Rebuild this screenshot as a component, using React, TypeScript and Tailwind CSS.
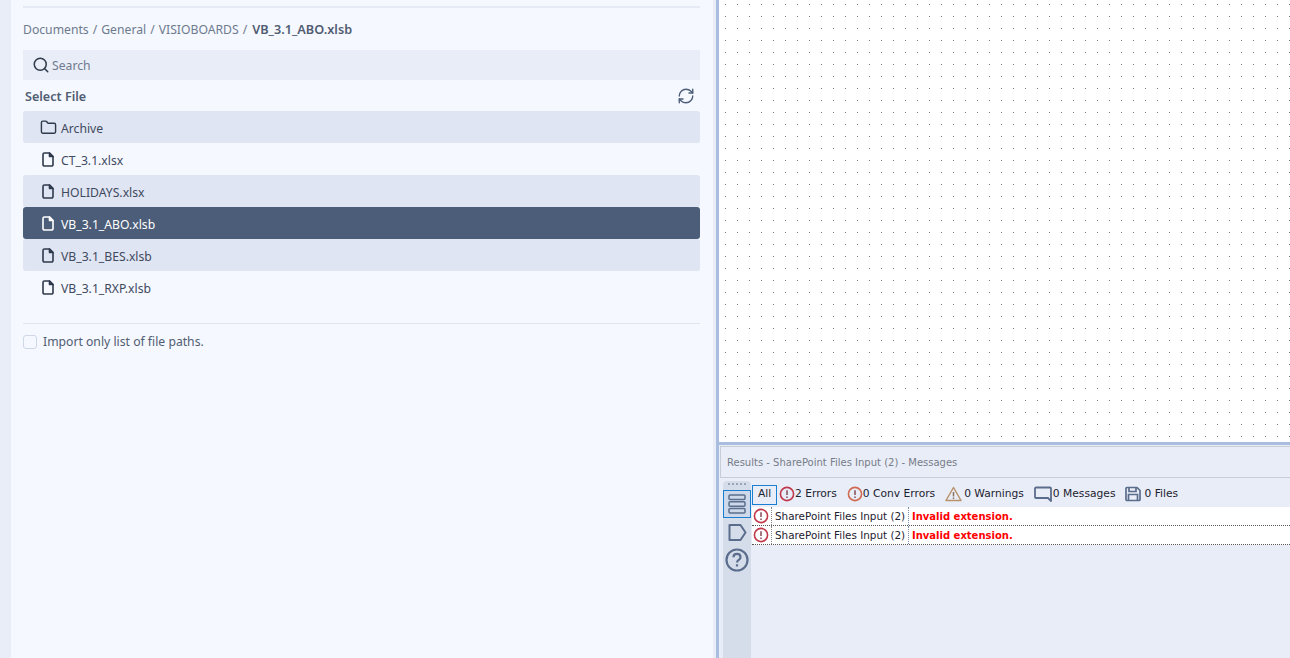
import { Folder, RefreshCw, Search } from "lucide-react";

const files = [
  { name: "Archive", folder: true, tone: "bg-[#dfe5f2] text-[#3f4a5f]" },
  { name: "CT_3.1.xlsx", tone: "text-[#3f4a5f]" },
  { name: "HOLIDAYS.xlsx", tone: "bg-[#dfe5f2] text-[#3f4a5f]" },
  { name: "VB_3.1_ABO.xlsb", tone: "bg-[#4b5d78] text-white" },
  { name: "VB_3.1_BES.xlsb", tone: "bg-[#dfe5f2] text-[#3f4a5f]" },
  { name: "VB_3.1_RXP.xlsb", tone: "text-[#3f4a5f]" },
];

function FileIcon({ color }: { color: string }) {
  return (
    <svg className="-ml-[1px]" width="12" height="15" viewBox="0 0 12 15" fill="none" stroke={color} strokeWidth="1.6">
      <path d="M1 2.500a1.500 1.500 0 0 1 1.500-1.500H7.500L11 4.500v8a1.500 1.500 0 0 1-1.500 1.500h-7A1.500 1.500 0 0 1 1 12.500z" strokeLinejoin="round" />
      <path d="M7.500 1v3.500H11z" fill={color} strokeLinejoin="round" />
    </svg>
  );
}

function AlertIcon({ color, size = 16 }: { color: string; size?: number }) {
  return (
    <svg width={size} height={size} viewBox="0 0 17 17" fill="none" stroke={color} strokeWidth="1.7">
      <circle cx="8.5" cy="8.5" r="7" />
      <path d="M8.5 4.5v5M8.5 11.2v1.600" stroke="#8a5560" />
    </svg>
  );
}

function FilterItem({ icon, label, gap = "gap-[1px]" }: { icon: React.ReactNode; label: string; gap?: string }) {
  return (
    <div className={`flex items-center ${gap}`}>
      {icon}
      <span>{label}</span>
    </div>
  );
}

function MessageRow() {
  return (
    <div className="flex h-[19px] items-center border-b border-dotted border-[#555] bg-white">
      <div className="flex h-full w-[20px] items-center border-r border-dotted border-[#888] pl-[1px]">
        <AlertIcon color="#c0394b" />
      </div>
      <div className="flex h-full w-[137px] items-center border-r border-dotted border-[#7a8fb0] pl-[3px] pt-[2px] text-[10.4px] text-[#1c2230]">
        SharePoint Files Input (2)
      </div>
      <div className="pl-[3px] text-[10px] font-bold text-[#ff0000]">Invalid extension.</div>
    </div>
  );
}

export default function App() {
  return (
    <div className="flex h-[658px] w-[1290px] overflow-hidden bg-[#e9edf7] font-['Noto_Sans',sans-serif]">
      <div className="w-[11px] shrink-0" />

      <div className="flex w-[702px] shrink-0 flex-col bg-[#f5f8fe] pl-[12px] pr-[13px] pt-[6px] text-[12.2px]">
        <div className="border-t-2 border-[#e6eaf5]" />
        <div className="mt-[12px] flex h-[20px] items-center gap-[4px] text-[#6e7a8e]">
          <span>Documents</span>
          <span>/</span>
          <span>General</span>
          <span>/</span>
          <span>VISIOBOARDS</span>
          <span>/</span>
          <span className="pl-[1px] text-[12.7px] font-semibold text-[#515d73]">VB_3.1_ABO.xlsb</span>
        </div>
        <div className="mt-[10px] flex h-[30px] items-center gap-[2px] bg-[#e9edf7] pl-[9px] text-[#6e7a8e]">
          <Search size={18} strokeWidth={2} className="text-[#2f3a4c]" />
          <span className="pt-[3px]">Search</span>
        </div>
        <div className="flex h-[31px] items-center justify-between pl-[2px] pr-[5px] text-[12.6px] font-semibold text-[#515d73]">
          <span className="pt-[3px]">Select File</span>
          <RefreshCw size={18} strokeWidth={1.8} className="text-[#4b5d78]" />
        </div>
        <div className="flex flex-col">
          {files.map((file) => (
            <div key={file.name} className={`flex h-[32px] items-center gap-[4px] rounded-[3px] pl-[17px] ${file.tone}`}>
              <div className="flex w-[17px] justify-center">
                {file.folder ? (
                  <Folder size={17} strokeWidth={2} className="text-[#2f3a4c]" />
                ) : (
                  <FileIcon color={file.name === "VB_3.1_ABO.xlsb" ? "#ffffff" : "#2f3a4c"} />
                )}
              </div>
              <span className="pt-[5px]">{file.name}</span>
            </div>
          ))}
        </div>
        <div className="mt-[20px] border-t border-[#e1e5f0]" />
        <div className="mt-[9px] flex h-[17px] items-center gap-[6px] text-[#515d73]">
          <div className="h-[14px] w-[14px] rounded-[3px] border border-[#cfd6e8] bg-[#f5f8fe]" />
          <span className="pt-[1px]">Import only list of file paths.</span>
        </div>
      </div>

      <div className="w-[3px] shrink-0 bg-[#e9edf7]" />
      <div className="w-[3px] shrink-0 bg-[#a9bde0]" />

      <div className="flex min-w-0 flex-1 flex-col overflow-hidden font-['DejaVu_Sans',sans-serif] text-[10.5px]">
        <div className="h-[442px] shrink-0 bg-white bg-[radial-gradient(circle_at_6.5px_4.5px,#777_0.6px,transparent_0.8px)] bg-[size:12px_12px]" />
        <div className="h-[3px] shrink-0 bg-[#a9bde0]" />
        <div className="flex flex-1 flex-col bg-[#e9edf7] pt-[1px]">
          <div className="-mr-[4px] ml-[1px] flex h-[32px] shrink-0 items-center border border-[#c8ccd4] pl-[6px] text-[10px] text-[#767c88]">
            Results - SharePoint Files Input (2) - Messages
          </div>
          <div className="flex flex-1 pl-[4px] pt-[3px]">
            <div className="flex w-[28px] shrink-0 flex-col items-center rounded-t-[4px] bg-[#d5ddea]">
              <div className="mt-[2px] h-[2px] w-[18px] border-t-2 border-dotted border-[#9aa5b8]" />
              <div className="mt-[5px] flex h-[28px] w-[28px] items-center justify-center border border-[#1a7fd0] bg-[#cdd8ea]">
                <svg width="18" height="20" viewBox="0 0 18 20" fill="none" stroke="#5b6d8c" strokeWidth="1.5">
                  <rect x="1" y="1" width="16" height="4.500" rx="1" />
                  <rect x="1" y="7.700" width="16" height="4.500" rx="1" />
                  <rect x="1" y="14.400" width="16" height="4.500" rx="1" />
                </svg>
              </div>
              <svg className="mt-[5px]" width="19" height="19" viewBox="0 0 19 19" fill="none" stroke="#5b6d8c" strokeWidth="2">
                <path d="M1.500 2h11l5 7.500-5 7.500h-11z" strokeLinejoin="round" />
              </svg>
              <svg className="mt-[6px]" width="24" height="24" viewBox="0 0 24 24" fill="none" stroke="#5b6d8c" strokeWidth="2.200">
                <circle cx="12" cy="12" r="10.500" />
                <path d="M8.500 9.200c0-4.400 7-4.400 7 0 0 2.800-3.500 2.600-3.500 5.300M12 16.200v2.200" />
              </svg>
            </div>
            <div className="min-w-0 flex-1 pl-[1px] pt-[1px] text-[#1c2230]">
              <div className="flex h-[25px] items-center gap-[2px] text-[10.7px]">
                <div className="flex h-[20px] w-[25px] items-center justify-center border border-[#1a7fd0]">All</div>
                <div className="flex items-center gap-[10px]">
                  <FilterItem icon={<AlertIcon color="#c0394b" />} label="2 Errors" gap="gap-0" />
                  <FilterItem icon={<AlertIcon color="#d0694f" />} label="0 Conv Errors" gap="gap-0" />
                  <FilterItem
                    gap="gap-[2px]"
                    icon={
                      <svg width="17" height="16" viewBox="0 0 17 16" fill="none" stroke="#b8926c" strokeWidth="1.5">
                        <path d="M8.500 1.500 16 14.500H1z" strokeLinejoin="round" />
                        <path d="M8.500 6v4.500M8.500 11.500v1.500" stroke="#8a7260" />
                      </svg>
                    }
                    label="0 Warnings"
                  />
                  <FilterItem
                    icon={
                      <svg width="18" height="17" viewBox="0 0 18 17" fill="none" stroke="#5b6d8c" strokeWidth="1.800">
                        <path d="M2 1.500h14a1 1 0 0 1 1 1v12.500l-3-3H2a1 1 0 0 1-1-1v-8.500a1 1 0 0 1 1-1z" strokeLinejoin="round" />
                      </svg>
                    }
                    label="0 Messages"
                  />
                  <FilterItem
                    gap="gap-[3px]"
                    icon={
                      <svg width="16" height="16" viewBox="0 0 16 16" fill="none" stroke="#5b6d8c" strokeWidth="1.700">
                        <path d="M1 2.500a1 1 0 0 1 1-1h10l3 3v9a1 1 0 0 1-1 1H2a1 1 0 0 1-1-1z" strokeLinejoin="round" />
                        <path d="M4 1.500v4h7v-4M3.500 14.500v-6h9v6" />
                      </svg>
                    }
                    label="0 Files"
                  />
                </div>
              </div>
              <MessageRow />
              <MessageRow />
            </div>
          </div>
        </div>
      </div>
    </div>
  );
}
